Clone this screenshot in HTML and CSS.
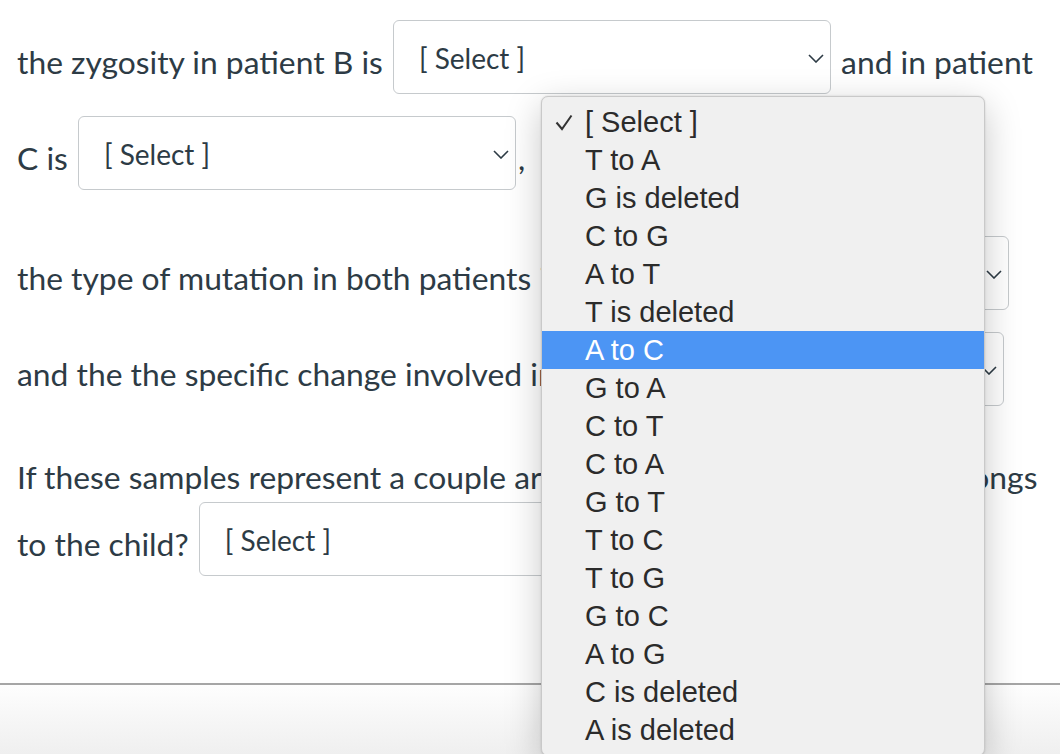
FILE: index.html
```html
<!DOCTYPE html>
<html lang="en">
<head>
<meta charset="utf-8">
<title>Quiz question</title>
<link rel="stylesheet" href="styles.css">
</head>
<body>
<main class="quiz">
  <p class="para">the zygosity in patient B is <span class="sel"><span class="sel-inner"><span class="sel-text">[ Select ]</span><svg class="chev" viewBox="0 0 16 9" width="16" height="9"><path d="M1 1 L8 8 L15 1"/></svg></span></span> and in patient<br>C is <span class="sel"><span class="sel-inner"><span class="sel-text">[ Select ]</span><svg class="chev" viewBox="0 0 16 9" width="16" height="9"><path d="M1 1 L8 8 L15 1"/></svg></span></span>,</p>
  <p class="para">the type of mutation in both patients is <span class="sel"><span class="sel-inner"><span class="sel-text">[ Select ]</span><svg class="chev" viewBox="0 0 16 9" width="16" height="9"><path d="M1 1 L8 8 L15 1"/></svg></span></span><br>and the the specific change involved in <span class="sel"><span class="sel-inner"><span class="sel-text">[ Select ]</span><svg class="chev" viewBox="0 0 16 9" width="16" height="9"><path d="M1 1 L8 8 L15 1"/></svg></span></span></p>
  <p class="para">If these samples represent a couple are the parents, which option belongs<br>to the child? <span class="sel"><span class="sel-inner"><span class="sel-text">[ Select ]</span><svg class="chev" viewBox="0 0 16 9" width="16" height="9"><path d="M1 1 L8 8 L15 1"/></svg></span></span></p>
</main>
<footer class="footer"></footer>
<ul class="menu">
  <li class="opt"><span class="mark"><svg viewBox="0 0 18 17" width="18" height="17"><path d="M1.5 8.5 L7 15 L16.5 1.5"/></svg></span>[ Select ]</li>
  <li class="opt"><span class="mark"></span>T to A</li>
  <li class="opt"><span class="mark"></span>G is deleted</li>
  <li class="opt"><span class="mark"></span>C to G</li>
  <li class="opt"><span class="mark"></span>A to T</li>
  <li class="opt"><span class="mark"></span>T is deleted</li>
  <li class="opt opt-active"><span class="mark"></span>A to C</li>
  <li class="opt"><span class="mark"></span>G to A</li>
  <li class="opt"><span class="mark"></span>C to T</li>
  <li class="opt"><span class="mark"></span>C to A</li>
  <li class="opt"><span class="mark"></span>G to T</li>
  <li class="opt"><span class="mark"></span>T to C</li>
  <li class="opt"><span class="mark"></span>T to G</li>
  <li class="opt"><span class="mark"></span>G to C</li>
  <li class="opt"><span class="mark"></span>A to G</li>
  <li class="opt"><span class="mark"></span>C is deleted</li>
  <li class="opt"><span class="mark"></span>A is deleted</li>
</ul>
</body>
</html>
```
FILE: styles.css
```css
html, body {
  height: 100%;
}
body {
  margin: 0;
  position: relative;
  overflow: hidden;
  display: flex;
  flex-direction: column;
  background: #ffffff;
  font-family: Lato, "Open Sans", sans-serif;
  color: #2d3b45;
}
.quiz {
  padding: 20px 0 0 17px;
}
.para {
  margin: 0 0 24px;
  font-size: 31.8px;
  line-height: 50px;
  white-space: nowrap;
}
.sel {
  display: inline-block;
  overflow: hidden;
  box-sizing: border-box;
  width: 438px;
  height: 74px;
  margin: 0 2px 22px;
  vertical-align: -42px;
  border: 1.5px solid #c6cacd;
  border-radius: 6px;
  background: #ffffff;
}
.sel-inner {
  display: flex;
  justify-content: space-between;
  align-items: flex-start;
  height: 100%;
  padding: 0 6px 0 25px;
}
.sel-text {
  margin-top: 20px;
  font-size: 28px;
  line-height: 34px;
}
.chev {
  margin-top: 33px;
}
.chev path {
  fill: none;
  stroke: #2d3b45;
  stroke-width: 1.6;
}
.footer {
  margin-top: auto;
  height: 69px;
  flex: none;
  border-top: 2px solid #a6a6a6;
  background: linear-gradient(#fefefe, #efefef);
}
.menu {
  position: absolute;
  left: 541px;
  top: 96px;
  width: 444px;
  box-sizing: border-box;
  margin: 0;
  padding: 6px 0 6px;
  list-style: none;
  background: #f0f0f0;
  border: 1px solid #c9c9c9;
  border-radius: 7px;
  box-shadow: 0 10px 36px rgba(0, 0, 0, 0.22), 0 0 2px rgba(0, 0, 0, 0.15);
  font-family: "Liberation Sans", Arial, sans-serif;
  font-size: 29px;
  color: #2b2b2b;
}
.opt {
  display: flex;
  align-items: center;
  height: 38px;
  line-height: 38px;
}
.mark {
  display: flex;
  align-items: center;
  width: 43px;
  height: 38px;
  padding-left: 13px;
  box-sizing: border-box;
  flex: none;
}
.mark path {
  fill: none;
  stroke: #333333;
  stroke-width: 2;
}
.opt-active {
  background: #4c95f4;
  color: #ffffff;
}
```
